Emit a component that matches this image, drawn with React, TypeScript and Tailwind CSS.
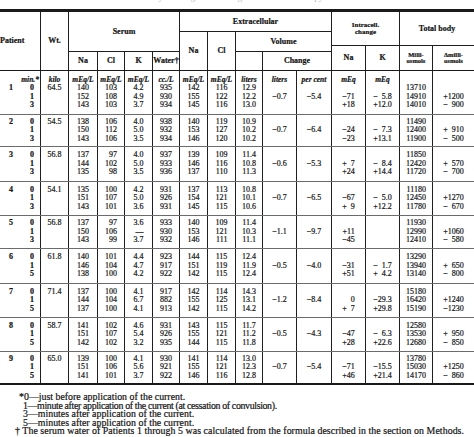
import React from "react";

// 15 columns, widths read off the scan
const GRID =
  "grid grid-cols-[41px_28px_29px_27px_28px_27px_28px_28px_27px_34px_35px_34px_34px_33px_41px]";

type Row = {
  p: string;
  m: string[];
  wt: string;
  h: string;
  cells: string[][];
};

const F = "\u2007"; // figure space, keeps signs lined up
const mid = (s: string) => ["", s, ""];
const low = (a: string, b: string) => ["", a, b];

const rows: Row[] = [
  {
    p: "1", m: ["0", "1", "3"], wt: "64.5", h: "h-[44px]",
    cells: [
      ["140", "152", "143"], ["103", "108", "103"], ["4.2", "4.9", "3.7"], ["935", "930", "934"],
      ["142", "155", "145"], ["116", "122", "116"], ["12.9", "12.2", "13.0"],
      mid("−0.7"), mid("−5.4"), low("−71", "+18"), low(`−${F}5.8`, "+12.0"),
      ["13710", "14910", "14010"], low("+1200", `−${F}900`),
    ],
  },
  {
    p: "2", m: ["0", "1", "3"], wt: "54.5", h: "h-[32px]",
    cells: [
      ["138", "150", "143"], ["106", "112", "106"], ["4.0", "5.0", "3.5"], ["938", "932", "934"],
      ["140", "153", "146"], ["119", "127", "120"], ["10.9", "10.2", "10.2"],
      mid("−0.7"), mid("−6.4"), low("−24", "−23"), low(`−${F}7.3`, "+13.1"),
      ["11490", "12400", "11900"], low(`+${F}910`, `−${F}500`),
    ],
  },
  {
    p: "3", m: ["0", "1", "3"], wt: "56.8", h: "h-[35px]",
    cells: [
      ["137", "144", "135"], ["97", "102", "98"], ["4.0", "5.0", "3.5"], ["937", "933", "936"],
      ["139", "146", "137"], ["109", "116", "110"], ["11.4", "10.8", "11.3"],
      mid("−0.6"), mid("−5.3"), low(`+${F}7`, "+24"), low(`−${F}8.4`, "+14.4"),
      ["11850", "12420", "11720"], low(`+${F}570`, `−${F}700`),
    ],
  },
  {
    p: "4", m: ["0", "1", "3"], wt: "54.1", h: "h-[34px]",
    cells: [
      ["135", "151", "143"], ["100", "107", "101"], ["4.2", "5.0", "3.6"], ["931", "926", "931"],
      ["137", "154", "145"], ["113", "121", "115"], ["10.8", "10.1", "10.6"],
      mid("−0.7"), mid("−6.5"), low("−67", `+${F}9`), low(`−${F}5.0`, "+12.2"),
      ["11180", "12450", "11780"], low("+1270", `−${F}670`),
    ],
  },
  {
    p: "5", m: ["0", "1", "3"], wt: "56.8", h: "h-[33px]",
    cells: [
      ["137", "150", "143"], ["97", "106", "99"], ["3.6", "—", "3.7"], ["933", "930", "932"],
      ["140", "153", "146"], ["109", "121", "111"], ["11.4", "10.3", "11.1"],
      mid("−1.1"), mid("−9.7"), low("+11", "−45"), ["", "", ""],
      ["11930", "12990", "12410"], low("+1060", `−${F}580`),
    ],
  },
  {
    p: "6", m: ["0", "1", "5"], wt: "61.8", h: "h-[35px]",
    cells: [
      ["140", "146", "138"], ["101", "104", "100"], ["4.4", "4.7", "4.2"], ["923", "917", "922"],
      ["144", "151", "142"], ["115", "119", "115"], ["12.4", "11.9", "12.4"],
      mid("−0.5"), mid("−4.0"), low("−31", "+51"), low(`−${F}1.7`, `+${F}4.2`),
      ["13290", "13940", "13140"], low(`+${F}650`, `−${F}800`),
    ],
  },
  {
    p: "7", m: ["0", "1", "5"], wt: "71.4", h: "h-[34px]",
    cells: [
      ["137", "144", "137"], ["100", "104", "100"], ["4.1", "6.7", "4.1"], ["917", "882", "913"],
      ["142", "155", "142"], ["114", "125", "115"], ["14.3", "13.1", "14.2"],
      mid("−1.2"), mid("−8.4"), low("0", `+${F}7`), low("−29.3", "+29.8"),
      ["15180", "16420", "15190"], low("+1240", "−1230"),
    ],
  },
  {
    p: "8", m: ["0", "1", "5"], wt: "58.7", h: "h-[34px]",
    cells: [
      ["141", "151", "142"], ["102", "107", "102"], ["4.6", "5.4", "3.2"], ["931", "926", "935"],
      ["143", "155", "144"], ["115", "121", "115"], ["11.7", "11.2", "11.8"],
      mid("−0.5"), mid("−4.3"), low("−47", "+28"), low(`−${F}6.3`, "+22.6"),
      ["12580", "13530", "12680"], low(`+${F}950`, `−${F}850`),
    ],
  },
  {
    p: "9", m: ["0", "1", "5"], wt: "65.0", h: "h-[33px]",
    cells: [
      ["139", "151", "141"], ["100", "106", "101"], ["4.1", "5.6", "3.7"], ["930", "921", "922"],
      ["141", "155", "146"], ["114", "121", "116"], ["13.0", "12.3", "12.8"],
      mid("−0.7"), mid("−5.4"), low("−71", "+46"), low("−15.5", "+21.4"),
      ["13780", "15030", "14170"], low("+1250", `−${F}860`),
    ],
  },
];

const units = [
  "kilo", "mEq/L", "mEq/L", "mEq/L", "cc./L", "mEq/L", "mEq/L",
  "liters", "liters", "per cent", "mEq", "mEq", "", "",
];

function Lines({ lines, bold }: { lines: string[]; bold?: boolean }) {
  return (
    <div className={`flex flex-col text-right ${bold ? "font-bold" : ""}`}>
      {lines.map((t, i) => (
        <div key={i} className="h-[8.5px] leading-[8.5px] whitespace-pre">
          {t}
        </div>
      ))}
    </div>
  );
}

function BodyRow({ row, first, last }: { row: Row; first?: boolean; last?: boolean }) {
  const all = [[row.wt, "", ""], ...row.cells];
  return (
    <div
      className={`${GRID} ${row.h} ${
        last ? "border-b-2 border-[#1a1a1a]" : "border-b border-[#6b6b6b]"
      }`}
    >
      {/* patient + minutes */}
      <div className="flex flex-col justify-center border-r border-[#1f1f1f]">
        {first && (
          <div className="h-[8.5px] leading-[8.5px] text-right pr-px italic font-bold text-[7.5px]">
            min.*
          </div>
        )}
        <div className="flex justify-between pl-[9px] pr-[6px] font-bold">
          <div className="h-[8.5px] leading-[8.5px]">{row.p}</div>
          <Lines lines={row.m} />
        </div>
      </div>
      {all.map((lines, i) => (
        <div
          key={i}
          className={`flex flex-col items-center justify-center ${
            i < all.length - 1 ? "border-r border-[#1f1f1f]" : ""
          }`}
        >
          {first && (
            <div className="h-[8.5px] leading-[8.5px] italic font-bold text-[7.5px] whitespace-nowrap">
              {units[i]}
            </div>
          )}
          <Lines lines={lines} />
        </div>
      ))}
    </div>
  );
}

export default function App() {
  return (
    <div className="w-[474px] h-[437px] overflow-hidden bg-white text-[#141414] font-['Liberation_Serif','DejaVu_Serif',serif] text-[8px] [-webkit-text-stroke:0.2px_#141414]">
      {/* running title, mostly cut off by the crop */}
      <div className="h-[9px] overflow-hidden">
        <div className="-mt-[8px] pl-[130px] text-[9px] leading-[10px] text-[#b5b5b5] [-webkit-text-stroke:0px] whitespace-nowrap">
          Electrolyte Changes Following Electroshock Therapy
        </div>
      </div>

      {/* header */}
      <div
        className={`${GRID} grid-rows-[20px_14px_6px_18px] border-t-[3px] border-b border-[#1a1a1a] font-bold leading-[8px]`}
      >
        <div className="col-start-1 row-start-1 row-span-4 flex items-center border-r border-[#1f1f1f]">
          Patient
        </div>
        <div className="col-start-2 row-start-1 row-span-4 flex items-center justify-center border-r border-[#1f1f1f]">
          Wt.
        </div>
        <div className="col-start-3 col-span-4 row-start-1 row-span-3 flex items-center justify-center border-r border-b border-[#1f1f1f]">
          Serum
        </div>
        <div className="col-start-3 row-start-4 flex items-center justify-center border-r border-[#1f1f1f]">
          Na
        </div>
        <div className="col-start-4 row-start-4 flex items-center justify-center border-r border-[#1f1f1f]">
          Cl
        </div>
        <div className="col-start-5 row-start-4 flex items-center justify-center border-r border-[#1f1f1f]">
          K
        </div>
        <div className="col-start-6 row-start-4 flex items-center justify-center border-r border-[#1f1f1f] whitespace-nowrap">
          Water†
        </div>
        <div className="col-start-7 col-span-5 row-start-1 flex items-center justify-center border-r border-b border-[#1f1f1f]">
          Extracellular
        </div>
        <div className="col-start-7 row-start-2 row-span-3 flex items-center justify-center border-r border-[#1f1f1f]">
          Na
        </div>
        <div className="col-start-8 row-start-2 row-span-3 flex items-center justify-center border-r border-[#1f1f1f]">
          Cl
        </div>
        <div className="col-start-9 col-span-3 row-start-2 row-span-2 flex items-center justify-center border-r border-b border-[#1f1f1f]">
          Volume
        </div>
        <div className="col-start-9 row-start-4 border-r border-[#1f1f1f]" />
        <div className="col-start-10 col-span-2 row-start-4 flex items-center justify-center border-r border-[#1f1f1f]">
          Change
        </div>
        <div className="col-start-12 col-span-2 row-start-1 row-span-2 flex flex-col items-center justify-center border-r border-b border-[#1f1f1f] text-[7px] leading-[6.5px]">
          <span>Intracell.</span>
          <span>change</span>
        </div>
        <div className="col-start-12 row-start-3 row-span-2 flex items-center justify-center border-r border-[#1f1f1f]">
          Na
        </div>
        <div className="col-start-13 row-start-3 row-span-2 flex items-center justify-center border-r border-[#1f1f1f]">
          K
        </div>
        <div className="col-start-14 col-span-2 row-start-1 row-span-2 flex items-center justify-center border-b border-[#1f1f1f]">
          Total body
        </div>
        <div className="col-start-14 row-start-3 row-span-2 flex flex-col items-center justify-center border-r border-[#1f1f1f] text-[6.5px] leading-[6px]">
          <span>Milli-</span>
          <span>osmols</span>
        </div>
        <div className="col-start-15 row-start-3 row-span-2 flex flex-col items-center justify-center text-[6.5px] leading-[6px]">
          <span>Δmilli-</span>
          <span>osmols</span>
        </div>
      </div>

      {/* body */}
      {rows.map((r, i) => (
        <BodyRow key={r.p} row={r} first={i === 0} last={i === rows.length - 1} />
      ))}

      {/* footnotes */}
      <div className="pt-[8px] text-[9.9px] leading-[8.5px] whitespace-nowrap">
        <div className="pl-[19px]">*0—just before application of the current.</div>
        <div className="pl-[23px] tracking-[-0.35px]">
          1—minute after application of the current (at cessation of convulsion).
        </div>
        <div className="pl-[23px]">3—minutes after application of the current.</div>
        <div className="pl-[23px]">5—minutes after application of the current.</div>
        <div className="pl-[15px] tracking-[0.05px]">
          † The serum water of Patients 1 through 5 was calculated from the formula described in the section on Methods.
        </div>
      </div>
    </div>
  );
}
